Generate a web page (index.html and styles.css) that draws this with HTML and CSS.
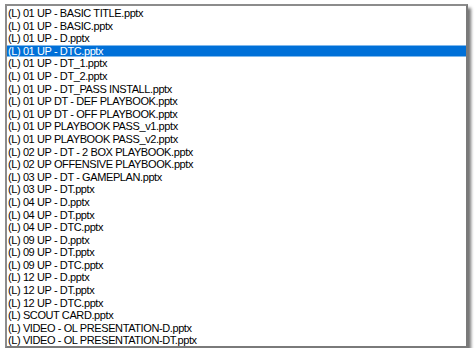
FILE: index.html
```html
<!DOCTYPE html>
<html lang="en">
<head>
    <meta charset="UTF-8">
    <meta name="viewport" content="width=device-width, initial-scale=1.0">
    <title>File List</title>
    <link rel="stylesheet" href="styles.css">
</head>
<body>
    <div class="listbox">
        <ul class="files">
            <li>(L) 01 UP - BASIC TITLE.pptx</li>
            <li>(L) 01 UP - BASIC.pptx</li>
            <li>(L) 01 UP - D.pptx</li>
            <li class="selected">(L) 01 UP - DTC.pptx</li>
            <li>(L) 01 UP - DT_1.pptx</li>
            <li>(L) 01 UP - DT_2.pptx</li>
            <li>(L) 01 UP - DT_PASS INSTALL.pptx</li>
            <li>(L) 01 UP DT - DEF PLAYBOOK.pptx</li>
            <li>(L) 01 UP DT - OFF PLAYBOOK.pptx</li>
            <li>(L) 01 UP PLAYBOOK PASS_v1.pptx</li>
            <li>(L) 01 UP PLAYBOOK PASS_v2.pptx</li>
            <li>(L) 02 UP - DT - 2 BOX PLAYBOOK.pptx</li>
            <li>(L) 02 UP OFFENSIVE PLAYBOOK.pptx</li>
            <li>(L) 03 UP - DT - GAMEPLAN.pptx</li>
            <li>(L) 03 UP - DT.pptx</li>
            <li>(L) 04 UP - D.pptx</li>
            <li>(L) 04 UP - DT.pptx</li>
            <li>(L) 04 UP - DTC.pptx</li>
            <li>(L) 09 UP - D.pptx</li>
            <li>(L) 09 UP - DT.pptx</li>
            <li>(L) 09 UP - DTC.pptx</li>
            <li>(L) 12 UP - D.pptx</li>
            <li>(L) 12 UP - DT.pptx</li>
            <li>(L) 12 UP - DTC.pptx</li>
            <li>(L) SCOUT CARD.pptx</li>
            <li>(L) VIDEO - OL PRESENTATION-D.pptx</li>
            <li>(L) VIDEO - OL PRESENTATION-DT.pptx</li>
        </ul>
    </div>
</body>
</html>
```

FILE: styles.css
```css
body { margin: 0; padding: 4px 0 0 5px; background: #fff; font-family: "Liberation Sans", Arial, sans-serif; }
.listbox { width: 463px; height: 344px; border: 2px solid #8c8c8c; border-right-color: #7a7a7a; border-bottom-color: #7a7a7a; background: #fff; box-shadow: 3px 4px 3px rgba(0, 0, 0, 0.55); box-sizing: border-box; }
.files { list-style: none; margin: 0; padding: 1px 0 0 0; }
.files li { height: 12.6px; line-height: 12.6px; padding-left: 1px; font-size: 11px; letter-spacing: -0.4px; color: #000; white-space: nowrap; }
.files li.selected { background: #0070d8; color: #fff; box-shadow: inset 0 1px 0 #7fb8ec, inset 0 -1px 0 #7fb8ec; }
```
